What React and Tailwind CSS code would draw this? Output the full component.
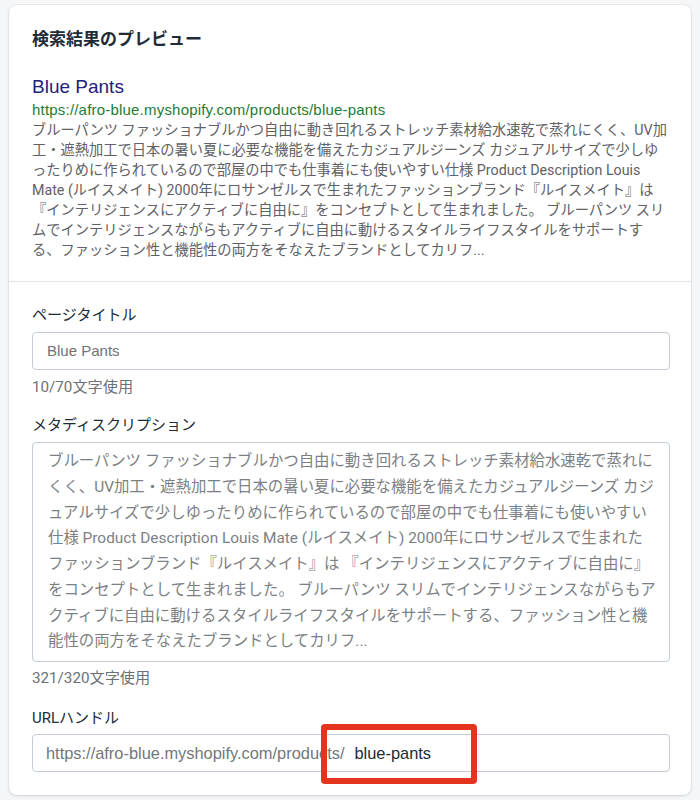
const previewLines = [
  "ブルーパンツ ファッショナブルかつ自由に動き回れるストレッチ素材給水速乾で蒸れにくく、UV加",
  "工・遮熱加工で日本の暑い夏に必要な機能を備えたカジュアルジーンズ カジュアルサイズで少しゆ",
  "ったりめに作られているので部屋の中でも仕事着にも使いやすい仕様 Product Description Louis",
  "Mate (ルイスメイト) 2000年にロサンゼルスで生まれたファッションブランド『ルイスメイト』は",
  "『インテリジェンスにアクティブに自由に』をコンセプトとして生まれました。 ブルーパンツ スリ",
  "ムでインテリジェンスながらもアクティブに自由に動けるスタイルライフスタイルをサポートす",
  "る、ファッション性と機能性の両方をそなえたブランドとしてカリフ...",
];

const metaLines = [
  "ブルーパンツ ファッショナブルかつ自由に動き回れるストレッチ素材給水速乾で蒸れに",
  "くく、UV加工・遮熱加工で日本の暑い夏に必要な機能を備えたカジュアルジーンズ カジ",
  "ュアルサイズで少しゆったりめに作られているので部屋の中でも仕事着にも使いやすい",
  "仕様 Product Description Louis Mate (ルイスメイト) 2000年にロサンゼルスで生まれた",
  "ファッションブランド『ルイスメイト』は 『インテリジェンスにアクティブに自由に』",
  "をコンセプトとして生まれました。 ブルーパンツ スリムでインテリジェンスながらもア",
  "クティブに自由に動けるスタイルライフスタイルをサポートする、ファッション性と機",
  "能性の両方をそなえたブランドとしてカリフ...",
];

const sans = "font-['Liberation_Sans','Noto_Sans_CJK_JP',sans-serif]";
const body = "font-['Roboto','Noto_Sans_CJK_JP',sans-serif]";

function Label({ children, className = "" }) {
  return (
    <div className={`${body} text-[15px] leading-[20px] text-[#212b36] ${className}`}>
      {children}
    </div>
  );
}

function Help({ children, className = "" }) {
  return (
    <div className={`${body} text-[15.2px] leading-[20px] text-[#6b7177] ${className}`}>
      {children}
    </div>
  );
}

export default function App() {
  return (
    <div className="min-h-screen bg-[#f4f6f8] px-[9px] pt-[5px] pb-[5px]">
      <div className="bg-white rounded-lg shadow-[0_0_0_1px_rgba(63,63,68,0.05),0_1px_3px_rgba(63,63,68,0.15)]">
        {/* Preview */}
        <div className="pl-[23px] pr-[21px] pt-[23px] pb-[21px]">
          <h2 className={`${sans} text-[17px] leading-[24px] font-bold text-[#212b36]`}>
            検索結果のプレビュー
          </h2>
          <div className={`${sans} mt-[22px] text-[19px] leading-[26px] text-[#22227a]`}>
            Blue Pants
          </div>
          <div className={`${sans} text-[15px] tracking-[0.2px] leading-[20px] text-[#1e7b34]`}>
            https://afro-blue.myshopify.com/products/blue-pants
          </div>
          <div className={`${body} text-[14.25px] leading-[20px] text-[#5f6166]`}>
            {previewLines.map((line) => (
              <div key={line} className="whitespace-nowrap">
                {line}
              </div>
            ))}
          </div>
        </div>

        {/* Fields */}
        <div className="border-t border-[#dfe3e8] pl-[23px] pr-[21px] pt-[23px] pb-[23px]">
          <Label>ページタイトル</Label>
          <div className="mt-[7px] h-[38px] flex items-center rounded border border-[#c4cdd5] px-[14px]">
            <span className={`${sans} text-[15px] text-[#6f7378]`}>Blue Pants</span>
          </div>
          <Help className="mt-[7px]">10/70文字使用</Help>

          <Label className="mt-[18px]">メタディスクリプション</Label>
          <div className="mt-[7px] h-[220px] rounded border border-[#c4cdd5] pl-[15px] pr-[8px] pt-[6px] overflow-hidden">
            <div className={`${body} text-[15.4px] leading-[25.75px] text-[#7c7f84]`}>
              {metaLines.map((line) => (
                <div key={line} className="whitespace-nowrap">
                  {line}
                </div>
              ))}
            </div>
          </div>
          <Help className="mt-[6px]">321/320文字使用</Help>

          <Label className="mt-[20px]">URLハンドル</Label>
          <div className="relative mt-[6px] h-[38px] flex items-center rounded border border-[#c4cdd5] px-[13px]">
            <span className={`${sans} text-[16.4px] text-[#73777c]`}>
              https://afro-blue.myshopify.com/products/
            </span>
            <span className={`${sans} ml-[10px] text-[16.4px] text-[#212b36]`}>blue-pants</span>
            <div className="absolute left-[288px] top-[-11px] w-[156px] h-[60px] rounded-[4px] border-[6px] border-[#e5341e]" />
          </div>
        </div>
      </div>
    </div>
  );
}
